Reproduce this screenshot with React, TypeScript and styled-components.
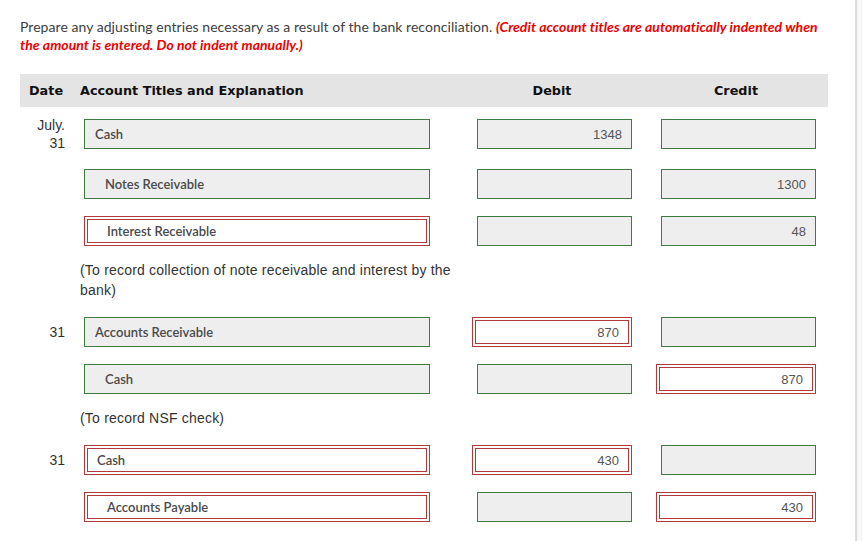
import styled, { createGlobalStyle, css } from "styled-components";

const GlobalStyle = createGlobalStyle`
  html, body {
    margin: 0;
    padding: 0;
    background: #ffffff;
    height: 541px;
    overflow: hidden;
  }
  * {
    box-sizing: border-box;
  }
`;

const GREEN = "#3f7a3f";
const RED = "#b23a3a";

const Page = styled.div`
  display: flex;
  width: 863px;
  height: 541px;
`;

const Main = styled.div`
  width: 855px;
  padding: 18px 0 0 20px;
`;

const Gutter = styled.div`
  width: 8px;
  height: 100%;
  border-left: 2px solid #dcdcdc;
  background: #f8f8f8;
`;

const Intro = styled.p`
  margin: 0;
  width: 808px;
  font-family: Lato, "Liberation Sans", sans-serif;
  font-size: 14px;
  line-height: 18px;
  letter-spacing: 0.05px;
  color: #404040;
`;

const Hint = styled.em`
  color: #ee0000;
  font-weight: 700;
  font-style: italic;
`;

const HeaderBar = styled.div`
  margin-top: 20px;
  width: 808px;
  height: 33px;
  background: #e4e4e4;
  display: grid;
  grid-template-columns: 60px 350px 42px 160px 24px 160px;
  align-items: center;
  font-family: "DejaVu Sans", Verdana, sans-serif;
  font-weight: 700;
  font-size: 12.8px;
  color: #111;
`;

const HeadCell = styled.div<{ $center?: boolean; $flush?: boolean }>`
  padding-left: ${(p) => (p.$center || p.$flush ? 0 : 9)}px;
  text-align: ${(p) => (p.$center ? "center" : "left")};
`;

const Body = styled.div`
  margin-top: 9px;
  display: flex;
  flex-direction: column;
  gap: 17px;
  width: 808px;
`;

const Row = styled.div`
  display: grid;
  grid-template-columns: 64px 346px 202px 184px;
  align-items: center;
`;

const DateCell = styled.div`
  padding-right: 19px;
  text-align: right;
  font-family: "Liberation Sans", Arial, sans-serif;
  font-size: 14px;
  line-height: 18px;
  color: #333;
`;

const AmountCell = styled.div`
  display: flex;
  justify-content: flex-end;
`;

const boxBase = css<{ $wrong?: boolean }>`
  height: 30px;
  display: flex;
  align-items: center;
  border: 1px solid ${(p) => (p.$wrong ? RED : GREEN)};
  background: ${(p) => (p.$wrong ? "#ffffff" : "#eeeeee")};
  box-shadow: ${(p) =>
    p.$wrong ? `inset 0 0 0 2px #ffffff, inset 0 0 0 3px ${RED}` : "none"};
`;

const AccountBox = styled.div<{ $wrong?: boolean; $indent?: boolean }>`
  ${boxBase};
  width: 346px;
  padding-left: ${(p) => (p.$indent ? 20 : 10) + (p.$wrong ? 2 : 0)}px;
  font-family: Lato, "Liberation Sans", sans-serif;
  font-weight: 600;
  font-size: 13px;
  color: #4a4a4a;
`;

const AmountBox = styled.div<{ $wrong?: boolean }>`
  ${boxBase};
  width: ${(p) => (p.$wrong ? 160 : 155)}px;
  justify-content: flex-end;
  padding-right: ${(p) => (p.$wrong ? 12 : 9)}px;
  font-family: "Liberation Sans", Arial, sans-serif;
  font-size: 13px;
  color: #555;
`;

const Explanation = styled.div`
  margin-top: -3px;
  padding-left: 60px;
  width: 455px;
  font-family: "Liberation Sans", Arial, sans-serif;
  font-size: 14px;
  line-height: 20px;
  letter-spacing: 0.2px;
  color: #333;
`;

type Entry = {
  date?: string[];
  account: string;
  indent?: boolean;
  accountWrong?: boolean;
  debit?: string;
  debitWrong?: boolean;
  credit?: string;
  creditWrong?: boolean;
};

type Block = { entries: Entry[]; note?: string };

const blocks: Block[] = [
  {
    entries: [
      { date: ["July.", "31"], account: "Cash", debit: "1348" },
      { account: "Notes Receivable", indent: true, credit: "1300" },
      { account: "Interest Receivable", indent: true, accountWrong: true, credit: "48" },
    ],
    note: "(To record collection of note receivable and interest by the bank)",
  },
  {
    entries: [
      { date: ["31"], account: "Accounts Receivable", debit: "870", debitWrong: true },
      { account: "Cash", indent: true, credit: "870", creditWrong: true },
    ],
    note: "(To record NSF check)",
  },
  {
    entries: [
      { date: ["31"], account: "Cash", accountWrong: true, debit: "430", debitWrong: true },
      { account: "Accounts Payable", indent: true, accountWrong: true, credit: "430", creditWrong: true },
    ],
  },
];

const EntryRow = ({ e }: { e: Entry }) => (
  <Row>
    <DateCell>
      {e.date?.map((d) => (
        <div key={d}>{d}</div>
      ))}
    </DateCell>
    <AccountBox $wrong={e.accountWrong} $indent={e.indent}>
      {e.account}
    </AccountBox>
    <AmountCell>
      <AmountBox $wrong={e.debitWrong}>{e.debit}</AmountBox>
    </AmountCell>
    <AmountCell>
      <AmountBox $wrong={e.creditWrong}>{e.credit}</AmountBox>
    </AmountCell>
  </Row>
);

export default function App() {
  const rows: JSX.Element[] = [];
  blocks.forEach((b, i) => {
    b.entries.forEach((e, j) => rows.push(<EntryRow key={`${i}-${j}`} e={e} />));
    if (b.note) rows.push(<Explanation key={`n${i}`}>{b.note}</Explanation>);
  });

  return (
    <>
      <GlobalStyle />
      <Page>
        <Main>
          <Intro>
            Prepare any adjusting entries necessary as a result of the bank
            reconciliation.{" "}
            <Hint>
              (Credit account titles are automatically indented when the amount
              is entered. Do not indent manually.)
            </Hint>
          </Intro>
          <HeaderBar>
            <HeadCell>Date</HeadCell>
            <HeadCell $flush>Account Titles and Explanation</HeadCell>
            <div />
            <HeadCell $center>Debit</HeadCell>
            <div />
            <HeadCell $center>Credit</HeadCell>
          </HeaderBar>
          <Body>{rows}</Body>
        </Main>
        <Gutter />
      </Page>
    </>
  );
}
